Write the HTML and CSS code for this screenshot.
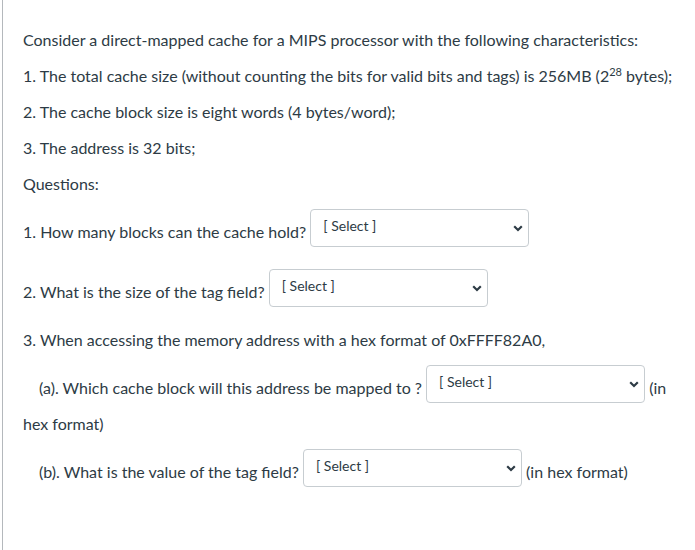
FILE: index.html
```html
<!DOCTYPE html>
<html lang="en">
<head>
<meta charset="utf-8">
<title>Quiz question</title>
<link rel="stylesheet" href="styles.css">
</head>
<body>
<div class="question">
  <p>Consider a direct-mapped cache for a MIPS processor with the following characteristics:</p>
  <p>1. The total cache size (without counting the bits for valid bits and tags) is 256MB (2<sup>28</sup> bytes);</p>
  <p>2. The cache block size is eight words (4 bytes/word);</p>
  <p>3. The address is 32 bits;</p>
  <p>Questions:</p>
  <p>1. How many blocks can the cache hold? <span class="sel"><span class="sel-text">[ Select ]</span><svg class="chev" width="10" height="7" viewBox="0 0 10 7"><path d="M1.2 1.3 L5 5 L8.8 1.3" fill="none" stroke="#2d3b45" stroke-width="2.2"/></svg></span></p>
  <p>2. What is the size of the tag field? <span class="sel"><span class="sel-text">[ Select ]</span><svg class="chev" width="10" height="7" viewBox="0 0 10 7"><path d="M1.2 1.3 L5 5 L8.8 1.3" fill="none" stroke="#2d3b45" stroke-width="2.2"/></svg></span></p>
  <p>3. When accessing the memory address with a hex format of 0xFFFF82A0,</p>
  <p class="sub">(a). Which cache block will this address be mapped to ? <span class="sel"><span class="sel-text">[ Select ]</span><svg class="chev" width="10" height="7" viewBox="0 0 10 7"><path d="M1.2 1.3 L5 5 L8.8 1.3" fill="none" stroke="#2d3b45" stroke-width="2.2"/></svg></span> (in hex format)</p>
  <p class="sub">(b). What is the value of the tag field? <span class="sel"><span class="sel-text">[ Select ]</span><svg class="chev" width="10" height="7" viewBox="0 0 10 7"><path d="M1.2 1.3 L5 5 L8.8 1.3" fill="none" stroke="#2d3b45" stroke-width="2.2"/></svg></span> (in hex format)</p>
</div>
</body>
</html>
```

FILE: styles.css
```css
html, body {
  margin: 0;
  padding: 0;
  background: #ffffff;
}

body {
  font-family: Lato, "Open Sans", "Liberation Sans", sans-serif;
  font-size: 16px;
  line-height: 24px;
  color: #2d3b45;
}

.question {
  box-sizing: border-box;
  margin-left: 2px;
  min-height: 550px;
  border-left: 1px solid #b4b8bc;
  padding: 16px 11px 0 20px;
}

.question p {
  margin: 12px 0;
}

.question sup {
  font-size: 11px;
  line-height: 0;
  vertical-align: 6px;
}

.sub {
  text-indent: 16px;
}

.sel {
  box-sizing: border-box;
  display: inline-flex;
  align-items: center;
  justify-content: space-between;
  width: 219px;
  height: 38px;
  padding: 0 5px 4px 12px;
  border: 1px solid #c7cdd1;
  border-radius: 4px;
  background: #ffffff;
  font-size: 14px;
  line-height: 20px;
  text-indent: 0;
  vertical-align: 7px;
  margin-top: 1px;
  margin-bottom: 9px;
}

.sel-text {
  color: #2d3b45;
}

.chev {
  display: block;
  margin-top: 5px;
}
```
